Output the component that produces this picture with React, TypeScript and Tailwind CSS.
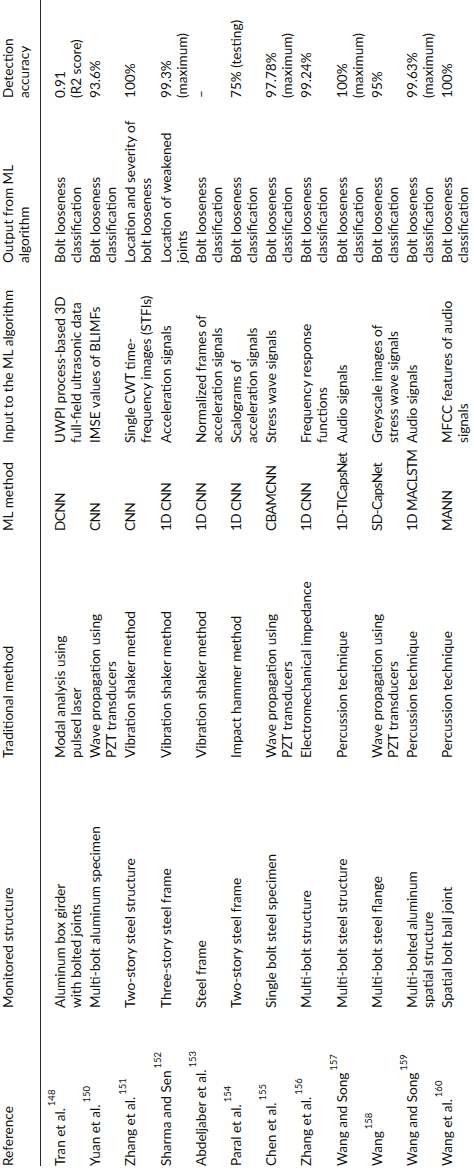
import React from "react";

type Row = {
  ref: string;
  sup: string;
  cells: string[][];
};

const rows: Row[] = [
  { ref: "Tran et al.", sup: "148", cells: [["Aluminum box girder", "with bolted joints"], ["Modal analysis using", "pulsed laser"], ["DCNN"], ["UWPI process-based 3D", "full-field ultrasonic data"], ["Bolt looseness", "classification"], ["0.91", "(R2 score)"]] },
  { ref: "Yuan et al.", sup: "150", cells: [["Multi-bolt aluminum specimen"], ["Wave propagation using", "PZT transducers"], ["CNN"], ["IMSE values of BLIMFs"], ["Bolt looseness", "classification"], ["93.6%"]] },
  { ref: "Zhang et al.", sup: "151", cells: [["Two-story steel structure"], ["Vibration shaker method"], ["CNN"], ["Single CWT time-", "frequency images (STFIs)"], ["Location and severity of", "bolt looseness"], ["100%"]] },
  { ref: "Sharma and Sen", sup: "152", cells: [["Three-story steel frame"], ["Vibration shaker method"], ["1D CNN"], ["Acceleration signals"], ["Location of weakened", "joints"], ["99.3%", "(maximum)"]] },
  { ref: "Abdeljaber et al.", sup: "153", cells: [["Steel frame"], ["Vibration shaker method"], ["1D CNN"], ["Normalized frames of", "acceleration signals"], ["Bolt looseness", "classification"], ["–"]] },
  { ref: "Paral et al.", sup: "154", cells: [["Two-story steel frame"], ["Impact hammer method"], ["1D CNN"], ["Scalograms of", "acceleration signals"], ["Bolt looseness", "classification"], ["75% (testing)"]] },
  { ref: "Chen et al.", sup: "155", cells: [["Single bolt steel specimen"], ["Wave propagation using", "PZT transducers"], ["CBAMCNN"], ["Stress wave signals"], ["Bolt looseness", "classification"], ["97.78%", "(maximum)"]] },
  { ref: "Zhang et al.", sup: "156", cells: [["Multi-bolt structure"], ["Electromechanical impedance"], ["1D CNN"], ["Frequency response", "functions"], ["Bolt looseness", "classification"], ["99.24%"]] },
  { ref: "Wang and Song", sup: "157", cells: [["Multi-bolt steel structure"], ["Percussion technique"], ["1D-TICapsNet"], ["Audio signals"], ["Bolt looseness", "classification"], ["100%", "(maximum)"]] },
  { ref: "Wang", sup: "158", cells: [["Multi-bolt steel flange"], ["Wave propagation using", "PZT transducers"], ["SD-CapsNet"], ["Greyscale images of", "stress wave signals"], ["Bolt looseness", "classification"], ["95%"]] },
  { ref: "Wang and Song", sup: "159", cells: [["Multi-bolted aluminum", "spatial structure"], ["Percussion technique"], ["1D MACLSTM"], ["Audio signals"], ["Bolt looseness", "classification"], ["99.63%", "(maximum)"]] },
  { ref: "Wang et al.", sup: "160", cells: [["Spatial bolt ball joint"], ["Percussion technique"], ["MANN"], ["MFCC features of audio", "signals"], ["Bolt looseness", "classification"], ["100%"]] },
];

const headers: string[][] = [
  ["Reference"],
  ["Monitored structure"],
  ["Traditional method"],
  ["ML method"],
  ["Input to the ML algorithm"],
  ["Output from ML", "algorithm"],
  ["Detection", "accuracy"],
];

const grid = "grid grid-cols-[158px_250px_227px_88px_180px_165px_100px]";

function Lines({ lines, tight }: { lines: string[]; tight?: boolean }) {
  return (
    <div className={tight ? "flex flex-col tracking-[-0.6px]" : "flex flex-col"}>
      {lines.map((l, i) => (
        <span key={i} className="whitespace-nowrap">
          {l}
        </span>
      ))}
    </div>
  );
}

export default function App() {
  return (
    <div className="w-[474px] h-[1171px] overflow-hidden bg-white">
      <div
        className="w-[1171px] h-[474px] origin-top-left [transform:translateY(1171px)_rotate(-90deg)] pl-[3px] text-[13.6px] leading-[16px] text-[#111111]"
        style={{ fontFamily: "Lato, 'Open Sans', sans-serif" }}
      >
        <div className={`${grid} -mt-[2px] pb-[8px] border-b border-[#2a2a2a]`}>
          {headers.map((h, i) => (
            <Lines key={i} lines={h} />
          ))}
        </div>
        <div className="flex flex-col pt-[11px]">
          {rows.map((r, i) => (
            <div key={i} className={`${grid} h-[35.2px]`}>
              <div className="whitespace-nowrap">
                {r.ref}
                <sup className="ml-[2px] text-[9.5px] leading-none align-[5px]">{r.sup}</sup>
              </div>
              {r.cells.map((c, j) => (
                <Lines key={j} lines={c} tight={j === 2} />
              ))}
            </div>
          ))}
        </div>
      </div>
    </div>
  );
}
